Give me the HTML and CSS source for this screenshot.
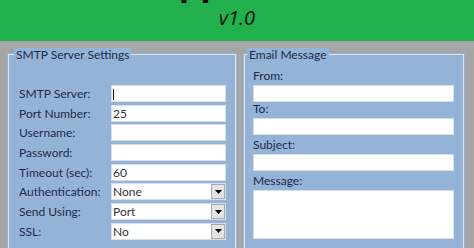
FILE: index.html
```html
<!DOCTYPE html>
<html>
<head>
<meta charset="utf-8">
<link rel="stylesheet" href="styles.css">
</head>
<body>
<header class="header">
  <div class="title">Email Application</div>
  <div class="version">v1.0</div>
</header>
<main class="main">
  <fieldset class="panel panel-smtp">
    <legend class="legend">SMTP Server Settings</legend>
    <div class="grid">
      <div class="label">SMTP Server:</div>
      <div class="field"><span class="caret"></span></div>
      <div class="label">Port Number:</div>
      <div class="field">25</div>
      <div class="label">Username:</div>
      <div class="field"></div>
      <div class="label">Password:</div>
      <div class="field"></div>
      <div class="label">Timeout (sec):</div>
      <div class="field">60</div>
      <div class="label">Authentication:</div>
      <div class="field select"><span class="value">None</span><span class="btn"><svg width="7" height="4" viewBox="0 0 7 4"><path d="M0 0H7L3.5 4Z" fill="#000"/></svg></span></div>
      <div class="label">Send Using:</div>
      <div class="field select"><span class="value">Port</span><span class="btn"><svg width="7" height="4" viewBox="0 0 7 4"><path d="M0 0H7L3.5 4Z" fill="#000"/></svg></span></div>
      <div class="label">SSL:</div>
      <div class="field select"><span class="value">No</span><span class="btn"><svg width="7" height="4" viewBox="0 0 7 4"><path d="M0 0H7L3.5 4Z" fill="#000"/></svg></span></div>
    </div>
  </fieldset>
  <fieldset class="panel panel-msg">
    <legend class="legend">Email Message</legend>
    <div class="msg-body">
      <div class="mlabel">From:</div>
      <div class="field mfield"></div>
      <div class="mlabel">To:</div>
      <div class="field mfield"></div>
      <div class="mlabel gap">Subject:</div>
      <div class="field mfield"></div>
      <div class="mlabel gap">Message:</div>
      <div class="field mfield message"></div>
    </div>
  </fieldset>
</main>
</body>
</html>
```
FILE: styles.css
```css
html, body {
  margin: 0;
  padding: 0;
}
body {
  width: 474px;
  height: 248px;
  overflow: hidden;
  background: #a6a6a6;
  font-family: Lato, "Liberation Sans", sans-serif;
  color: #1c2b48;
}
.header {
  height: 41px;
  background: #22b14c;
  overflow: hidden;
  display: flex;
  flex-direction: column;
  align-items: center;
}
.title {
  margin-top: -28px;
  margin-right: 72px;
  height: 20px;
  line-height: 20px;
  font-family: "Open Sans", sans-serif;
  font-weight: 700;
  font-size: 34px;
  color: #111;
  white-space: nowrap;
}
.version {
  margin-top: 15px;
  line-height: 22px;
  font-family: "Open Sans", sans-serif;
  font-style: italic;
  font-size: 20px;
  color: #111;
}
.main {
  display: grid;
  grid-template-columns: 228px 220px;
  column-gap: 8px;
  padding: 7px 0 0 8px;
  align-items: start;
}
.panel {
  margin: 0;
  min-width: 0;
  min-inline-size: 0;
  box-sizing: border-box;
  border: 1px solid #dde6f1;
  background: #95b3d7;
  box-shadow: 0 0 0 1px #95b3d7;
  height: 230px;
  padding: 0;
}
.panel-smtp {
  width: 228px;
}
.panel-msg {
  width: 220px;
}
.legend {
  background: #95b3d7;
  padding: 0 2px;
  font-size: 12px;
  line-height: 13px;
  color: #1c2b48;
}
.panel-smtp .legend {
  margin-left: 5px;
}
.panel-msg .legend {
  margin-left: 2px;
}
.grid {
  display: grid;
  grid-template-columns: 92px 115px;
  grid-auto-rows: 17px;
  row-gap: 2.7px;
  padding: 24px 9px 0 10px;
}
.label {
  font-size: 12px;
  line-height: 17px;
  white-space: nowrap;
}
.field {
  box-sizing: border-box;
  height: 17px;
  background: #fff;
  border: 1px solid #d6dfeb;
  font-size: 12px;
  line-height: 15px;
  padding-left: 1px;
  color: #333;
}
.caret {
  display: inline-block;
  width: 1px;
  height: 11px;
  background: #000;
  vertical-align: -2px;
}
.select {
  display: flex;
  align-items: center;
}
.select .value {
  flex: 1;
}
.btn {
  box-sizing: border-box;
  width: 14px;
  height: 15px;
  background: #e4e4e4;
  border: 1px solid #a8a8a8;
  display: flex;
  align-items: center;
  justify-content: center;
}
.msg-body {
  padding: 8px 9px 0 8px;
}
.mlabel {
  font-size: 12px;
  line-height: 14px;
  margin-bottom: 2px;
}
.mlabel.gap {
  margin-top: 3px;
}
.mfield {
  width: 201px;
}
.message {
  height: 49px;
}
```
